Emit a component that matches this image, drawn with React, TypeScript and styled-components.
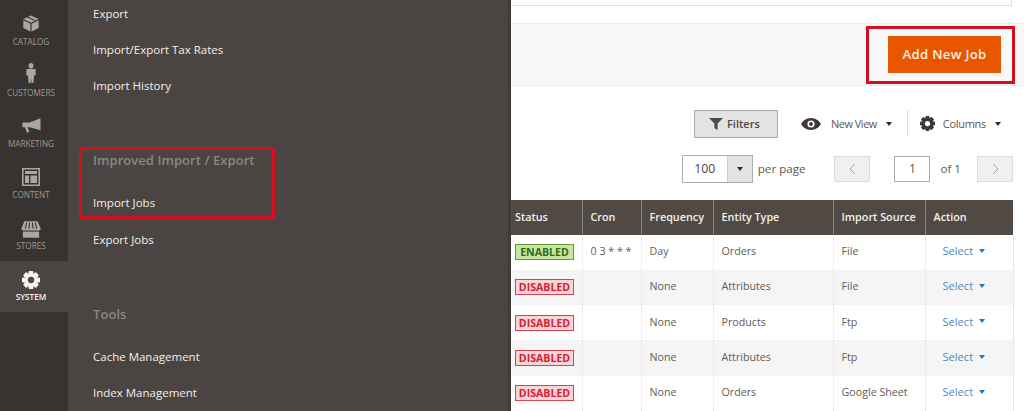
import React from "react";
import styled, { createGlobalStyle } from "styled-components";

const Global = createGlobalStyle`
  html, body { margin: 0; padding: 0; background: #fff; }
  * { box-sizing: border-box; }
`;

const Page = styled.div`
  position: relative;
  width: 1024px;
  height: 411px;
  overflow: hidden;
  display: flex;
  font-family: "Open Sans", sans-serif;
  background: #fff;
`;

const Rail = styled.nav`
  width: 68px;
  flex: none;
  background: #373330;
  padding-top: 6px;
  display: flex;
  flex-direction: column;
`;

const RailItem = styled.div<{ $active?: boolean; $gap: number }>`
  height: 51px;
  flex: none;
  background: ${(p) => (p.$active ? "#4a4542" : "transparent")};
  color: ${(p) => (p.$active ? "#f7f3eb" : "#aaa6a0")};
  display: flex;
  flex-direction: column;
  align-items: center;
  justify-content: flex-end;
  padding: 0 6px 10px 0;
  gap: ${(p) => p.$gap}px;
  svg { display: block; flex: none; }
`;

const RailLabel = styled.span<{ $active?: boolean }>`
  font-size: 8.2px;
  line-height: 11px;
  white-space: nowrap;
  font-weight: ${(p) => (p.$active ? 600 : 400)};
  color: ${(p) => (p.$active ? "#f7f3eb" : "#9d9992")};
`;

const Fly = styled.div`
  width: 440px;
  flex: none;
  background: #4a4542;
  padding-left: 25px;
  display: flex;
  flex-direction: column;
`;

const FlyLink = styled.div<{ $top: number }>`
  margin-top: ${(p) => p.$top}px;
  height: 18px;
  font-size: 11.5px;
  line-height: 18px;
  color: #f2efea;
`;

const FlyHead = styled.div<{ $top: number }>`
  margin-top: ${(p) => p.$top}px;
  height: 20px;
  font-size: 13px;
  line-height: 20px;
  font-weight: 600;
  letter-spacing: 0.06px;
  color: #8d8780;
`;

const Edge = styled.div`
  width: 3px;
  flex: none;
  background: #3f3b38;
`;

const Main = styled.main`
  flex: 1;
  min-width: 0;
  display: flex;
  flex-direction: column;
`;

const SearchStub = styled.div`
  height: 6px;
  width: 501px;
  border: 1px solid #e0e0e0;
  border-top: 0;
  border-left: 0;
  background: #fff;
`;

const ActionBar = styled.div`
  margin-top: 17px;
  height: 64px;
  background: #f8f8f8;
  border-top: 1px solid #ececec;
  border-bottom: 1px solid #ececec;
  display: flex;
  justify-content: flex-end;
  align-items: center;
  padding-right: 23px;
`;

const AddButton = styled.button`
  width: 113px;
  height: 37px;
  border: 0;
  padding: 0;
  background: #e85600;
  color: #fbeee2;
  font-family: inherit;
  font-size: 13.2px;
  font-weight: 600;
  letter-spacing: 0.3px;
`;

const ToolRow = styled.div`
  margin-top: 24px;
  height: 28px;
  padding-right: 23px;
  display: flex;
  justify-content: flex-end;
  align-items: center;
  color: #514943;
`;

const FilterButton = styled.button`
  width: 84px;
  height: 28px;
  padding: 0 0 0 14px;
  margin-right: 23px;
  background: #e3e3e3;
  border: 1px solid #adadad;
  color: #514943;
  font-family: inherit;
  font-size: 11px;
  font-weight: 600;
  display: flex;
  align-items: center;
  gap: 4px;
`;

const ViewLabel = styled.span`
  font-size: 11px;
  color: #5e5751;
  letter-spacing: -0.5px;
  margin: 0 9px 0 10px;
`;

const ColumnsLabel = styled.span`
  font-size: 11px;
  color: #5e5751;
  letter-spacing: -0.3px;
  margin: 0 9px 0 8px;
`;

const Caret = styled.span<{ $color?: string }>`
  display: inline-block;
  width: 0;
  height: 0;
  border-left: 3.5px solid transparent;
  border-right: 3.5px solid transparent;
  border-top: 4.5px solid ${(p) => p.$color ?? "#2f2a27"};
`;

const Divider = styled.span`
  width: 1px;
  height: 27px;
  background: #dcdcdc;
  margin: 0 12px 0 15px;
`;

const PagerRow = styled.div`
  margin-top: 17px;
  height: 28px;
  padding-right: 11px;
  display: flex;
  justify-content: flex-end;
  align-items: center;
  color: #514943;
  font-size: 11.6px;
`;

const PerPage = styled.div`
  width: 71px;
  height: 28px;
  border: 1px solid #adadad;
  display: flex;
`;

const PerValue = styled.div`
  width: 44px;
  font-size: 12.3px;
  line-height: 26px;
  text-align: center;
  color: #4a4542;
`;

const PerCaret = styled.div`
  flex: 1;
  background: #e3e3e3;
  border-left: 1px solid #cfcfcf;
  display: flex;
  align-items: center;
  justify-content: center;
`;

const PagerLabel = styled.span<{ $gap: number; $after: number }>`
  margin-left: ${(p) => p.$gap}px;
  margin-right: ${(p) => p.$after}px;
  color: #5e5751;
`;

const PageArrow = styled.div`
  width: 36px;
  height: 26px;
  background: #f0f0f0;
  border: 1px solid #dcdcdc;
  display: flex;
  align-items: center;
  justify-content: center;
`;

const PageInput = styled.div`
  width: 36px;
  height: 26px;
  margin-left: 24px;
  border: 1px solid #adadad;
  text-align: center;
  line-height: 24px;
  font-size: 12.3px;
  color: #5e5751;
`;

const Grid = styled.table`
  margin-top: 17px;
  width: 502px;
  border-collapse: collapse;
  table-layout: fixed;
  font-size: 10.7px;
`;

const Th = styled.th<{ $w: number }>`
  width: ${(p) => p.$w}px;
  height: 35px;
  padding: 0 0 2px ${(p) => (p.$w === 71 ? 4 : 8)}px;
  background: #514943;
  color: #f5f1ea;
  font-size: 10.8px;
  font-weight: 600;
  text-align: left;
  border-left: 1px solid #8a837c;
  &:first-child { border-left: 0; }
`;

const Tr = styled.tr<{ $odd: boolean }>`
  height: 35.3px;
  background: ${(p) => (p.$odd ? "#f5f5f5" : "#fff")};
`;

const Td = styled.td<{ $first?: boolean }>`
  padding: 0 0 ${(p) => (p.$first ? 0 : 2)}px ${(p) => (p.$first ? 4 : 8)}px;
  color: #635c56;
  white-space: nowrap;
  border-left: ${(p) => (p.$first ? "0" : "1px dotted #e0e0e0")};
  &:last-child { border-right: 1px solid #e6e6e6; padding-bottom: 3px; }
`;

const Badge = styled.span<{ $on: boolean }>`
  display: block;
  width: 59px;
  height: 16px;
  font-size: 10.6px;
  line-height: 14px;
  font-weight: 700;
  text-align: center;
  background: ${(p) => (p.$on ? "#c8e6a0" : "#fbd5d5")};
  color: ${(p) => (p.$on ? "#2f6b1b" : "#d3213a")};
  border: 1px solid ${(p) => (p.$on ? "#5f9a38" : "#d5434f")};
`;

const SelectLink = styled.span`
  margin-left: 9px;
  font-size: 11.1px;
  color: #4f8ac0;
  display: inline-flex;
  align-items: center;
  gap: 6px;
`;

const Mark = styled.div<{ $l: number; $t: number; $w: number; $h: number }>`
  position: absolute;
  left: ${(p) => p.$l}px;
  top: ${(p) => p.$t}px;
  width: ${(p) => p.$w}px;
  height: ${(p) => p.$h}px;
  border: 3px solid #d3101d;
  pointer-events: none;
`;

const CatalogIcon = () => (
  <svg width="16" height="17" viewBox="0 0 17 20" preserveAspectRatio="none" fill="currentColor">
    <path d="M8.5 0.5 L16.5 4.8 L8.5 9 L0.5 4.8 Z" />
    <path d="M0.3 6.2 L7.9 10.2 L7.9 19.5 L0.3 15.4 Z" />
    <path d="M16.7 6.2 L9.1 10.2 L9.1 19.5 L16.7 15.4 Z" />
    <path d="M4 2.7 L12 6.9 L13.3 6.2 L5.3 2 Z" fill="#373330" />
  </svg>
);
const CustomerIcon = () => (
  <svg width="10" height="20" viewBox="0 0 11 20" preserveAspectRatio="none" fill="currentColor">
    <circle cx="5.5" cy="2.8" r="2.7" />
    <path d="M1.4 6 H9.6 Q10.6 6 10.6 7.2 V12.4 H8.9 L8.2 20 H6 L5.5 14.6 L5 20 H2.8 L2.1 12.4 H0.4 V7.2 Q0.4 6 1.4 6 Z" />
  </svg>
);
const MarketingIcon = () => (
  <svg width="19" height="15" viewBox="0 0 19 17" preserveAspectRatio="none" fill="currentColor">
    <path d="M18.5 0.3 V14 L7.5 10.6 H5.5 L7.4 15.4 L5 16.6 L2.9 10.6 H0.5 V5 H7.5 Z" />
  </svg>
);
const ContentIcon = () => (
  <svg width="18" height="18" viewBox="0 0 18 18" fill="currentColor">
    <path fillRule="evenodd" d="M0 0 H18 V18 H0 Z M1.6 1.6 V16.4 H16.4 V1.6 Z" />
    <path d="M3 3 H15 V6 H3 Z M3 7.6 H7 V15 H3 Z M8.4 7.6 H15 V15 H8.4 Z" />
  </svg>
);
const StoresIcon = () => (
  <svg width="20" height="17" viewBox="0 0 21 17" preserveAspectRatio="none" fill="currentColor">
    <path d="M3.6 0.3 H17.4 L20.7 7.8 Q20.5 9.5 18.7 9.5 H2.3 Q0.5 9.5 0.3 7.8 Z" />
    <path d="M6 1.5 L4.6 7.6 M9 1.5 L8.4 7.6 M12 1.5 L12.6 7.6 M15 1.5 L16.4 7.6" stroke="#373330" strokeWidth="1.1" />
    <path d="M2 10.6 H19 V16.7 H2 Z" />
  </svg>
);
const GearIcon = ({ size = 18, hole = "#4a4542", color }: { size?: number; hole?: string; color?: string }) => (
  <svg width={size} height={size} viewBox="0 0 24 24" fill={color ?? "currentColor"}>
    <circle cx="12" cy="12" r="9" />
    {[0, 45, 90, 135].map((a) => (
      <rect key={a} x="8.8" y="0" width="6.4" height="24" rx="1.2" transform={`rotate(${a} 12 12)`} />
    ))}
    <circle cx="12" cy="12" r="4.2" fill={hole} />
  </svg>
);
const FunnelIcon = () => (
  <svg width="14" height="12" viewBox="0 0 14 13" preserveAspectRatio="none" fill="currentColor">
    <path d="M0 0 H14 L8.6 6 V13 L5.4 11 V6 Z" />
  </svg>
);
const EyeIcon = () => (
  <svg width="20" height="12" viewBox="0 0 20 12" fill="#3f3833">
    <path fillRule="evenodd" d="M10 0 C15 0 18.5 3.2 20 6 C18.5 8.8 15 12 10 12 C5 12 1.5 8.8 0 6 C1.5 3.2 5 0 10 0 Z M10 2.4 A3.6 3.6 0 1 0 10 9.6 A3.6 3.6 0 1 0 10 2.4 Z" />
    <circle cx="10" cy="6" r="1.9" />
  </svg>
);
const Chevron = ({ dir }: { dir: "l" | "r" }) => (
  <svg width="7" height="12" viewBox="0 0 7 12" fill="none" stroke="#a5a19c" strokeWidth="1">
    <path d={dir === "l" ? "M6 1 L1 6 L6 11" : "M1 1 L6 6 L1 11"} />
  </svg>
);

const railItems = [
  { label: "CATALOG", icon: <CatalogIcon />, gap: 4 },
  { label: "CUSTOMERS", icon: <CustomerIcon />, gap: 4 },
  { label: "MARKETING", icon: <MarketingIcon />, gap: 5 },
  { label: "CONTENT", icon: <ContentIcon />, gap: 3 },
  { label: "STORES", icon: <StoresIcon />, gap: 2 },
];

const columns = [
  ["Status", 71],
  ["Cron", 59],
  ["Frequency", 72],
  ["Entity Type", 120],
  ["Import Source", 92],
  ["Action", 88],
] as const;

const rows = [
  { on: true, cron: "0 3 * * *", freq: "Day", type: "Orders", src: "File" },
  { on: false, cron: "", freq: "None", type: "Attributes", src: "File" },
  { on: false, cron: "", freq: "None", type: "Products", src: "Ftp" },
  { on: false, cron: "", freq: "None", type: "Attributes", src: "Ftp" },
  { on: false, cron: "", freq: "None", type: "Orders", src: "Google Sheet" },
];

export default function App() {
  return (
    <Page>
      <Global />
      <Rail>
        {railItems.map((r) => (
          <RailItem key={r.label} $gap={r.gap}>
            {r.icon}
            <RailLabel>{r.label}</RailLabel>
          </RailItem>
        ))}
        <RailItem $active $gap={2}>
          <GearIcon />
          <RailLabel $active>SYSTEM</RailLabel>
        </RailItem>
      </Rail>
      <Fly>
        <FlyLink $top={5}>Export</FlyLink>
        <FlyLink $top={18}>Import/Export Tax Rates</FlyLink>
        <FlyLink $top={18}>Import History</FlyLink>
        <FlyHead $top={55}>Improved Import / Export</FlyHead>
        <FlyLink $top={24}>Import Jobs</FlyLink>
        <FlyLink $top={19}>Export Jobs</FlyLink>
        <FlyHead $top={55}>Tools</FlyHead>
        <FlyLink $top={24}>Cache Management</FlyLink>
        <FlyLink $top={18}>Index Management</FlyLink>
      </Fly>
      <Edge />
      <Main>
        <SearchStub />
        <ActionBar>
          <AddButton>Add New Job</AddButton>
        </ActionBar>
        <ToolRow>
          <FilterButton>
            <FunnelIcon />
            Filters
          </FilterButton>
          <EyeIcon />
          <ViewLabel>New View</ViewLabel>
          <Caret />
          <Divider />
          <GearIcon size={15} hole="#fff" color="#3f3833" />
          <ColumnsLabel>Columns</ColumnsLabel>
          <Caret />
        </ToolRow>
        <PagerRow>
          <PerPage>
            <PerValue>100</PerValue>
            <PerCaret>
              <Caret />
            </PerCaret>
          </PerPage>
          <PagerLabel $gap={5} $after={29}>per page</PagerLabel>
          <PageArrow>
            <Chevron dir="l" />
          </PageArrow>
          <PageInput>1</PageInput>
          <PagerLabel $gap={10} $after={16}>of 1</PagerLabel>
          <PageArrow>
            <Chevron dir="r" />
          </PageArrow>
        </PagerRow>
        <Grid>
          <thead>
            <tr>
              {columns.map(([name, w]) => (
                <Th key={name} $w={w}>{name}</Th>
              ))}
            </tr>
          </thead>
          <tbody>
            {rows.map((r, i) => (
              <Tr key={i} $odd={i % 2 === 1}>
                <Td $first>
                  <Badge $on={r.on}>{r.on ? "ENABLED" : "DISABLED"}</Badge>
                </Td>
                <Td>{r.cron}</Td>
                <Td>{r.freq}</Td>
                <Td>{r.type}</Td>
                <Td>{r.src}</Td>
                <Td>
                  <SelectLink>
                    Select <Caret $color="#1979c3" />
                  </SelectLink>
                </Td>
              </Tr>
            ))}
          </tbody>
        </Grid>
      </Main>
      <Mark $l={79} $t={147} $w={196} $h={72} />
      <Mark $l={866} $t={26} $w={149} $h={58} />
    </Page>
  );
}
